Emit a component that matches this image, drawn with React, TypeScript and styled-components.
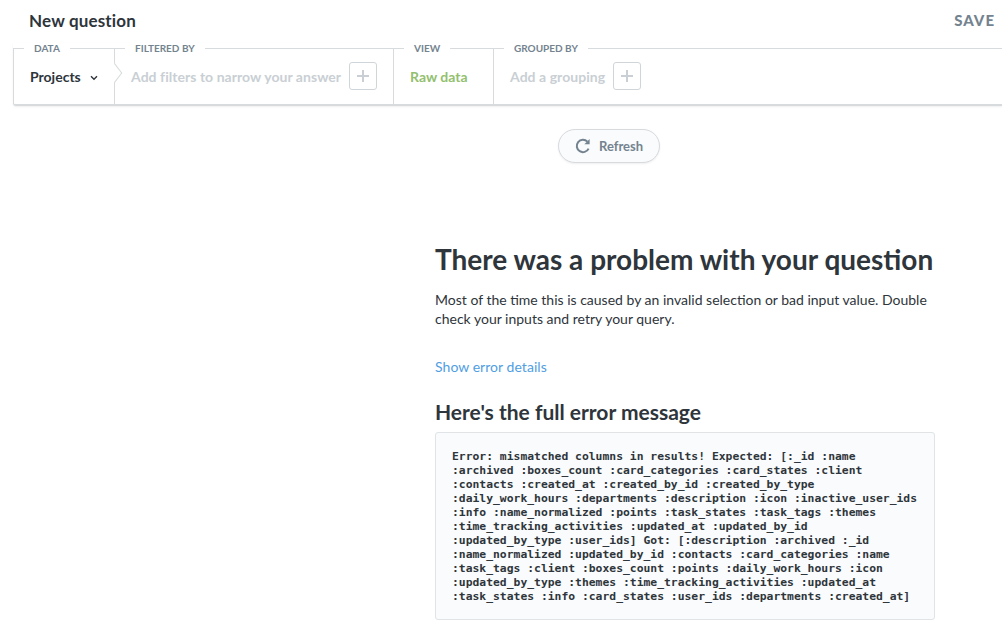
import React from "react";
import styled, { createGlobalStyle } from "styled-components";

const Global = createGlobalStyle`
  html, body { margin: 0; padding: 0; background: #fff; height: 640px; overflow: hidden; }
  body { font-family: Lato, "Open Sans", sans-serif; color: #2e353b; }
`;

const Header = styled.header`
  display: flex;
  align-items: center;
  justify-content: space-between;
  height: 42px;
  padding: 0 7px 2px 29px;
  box-sizing: border-box;
`;
const Title = styled.h1`
  margin: 0;
  font-size: 17px;
  font-weight: 700;
  letter-spacing: 0.17px;
  color: #2e353b;
`;
const Save = styled.span`
  font-size: 15px;
  font-weight: 900;
  letter-spacing: 1px;
  color: #74838f;
`;
const Bar = styled.div`
  display: flex;
  margin-left: 13px;
  margin-top: 1px;
  height: 61px;
  border-bottom: 2px solid #d7dbde;
  box-shadow: 0 1px 2px rgba(46, 53, 59, 0.08);
  border-bottom-left-radius: 3px;
`;
const Section = styled.section<{ $w?: number; $first?: boolean }>`
  display: flex;
  flex-direction: column;
  flex: ${(p) => (p.$w ? `0 0 ${p.$w}px` : "1 1 auto")};
  position: relative;
  &::before {
    content: "";
    position: absolute;
    left: 0;
    top: 5px;
    bottom: 0;
    width: 1px;
    background: #d7dbde;
    border-top-left-radius: ${(p) => (p.$first ? "3px" : "0")};
  }
`;
const LabelRow = styled.div<{ $gap: number }>`
  display: flex;
  align-items: center;
  height: 11px;
  gap: 10px;
  &::before {
    content: "";
    flex: 0 0 ${(p) => p.$gap}px;
    height: 1px;
    background: #d7dbde;
  }
  &::after {
    content: "";
    flex: 1;
    height: 1px;
    background: #d7dbde;
  }
`;
const Label = styled.span`
  font-size: 10px;
  font-weight: 700;
  line-height: 11px;
  text-transform: uppercase;
  color: #74838f;
`;
const Body = styled.div<{ $pad: number }>`
  flex: 1;
  display: flex;
  align-items: center;
  gap: 7.5px;
  padding-left: ${(p) => p.$pad}px;
  padding-bottom: 6px;
  font-size: 14px;
  font-weight: 700;
`;
const Strong = styled.span`
  color: #2e353b;
`;
const Ghost = styled.span`
  color: #c9cfd4;
  letter-spacing: 0.05px;
`;
const Green = styled.span`
  color: #93bf6f;
`;
const AddBox = styled.span`
  display: flex;
  align-items: center;
  justify-content: center;
  box-sizing: border-box;
  width: 28px;
  height: 28px;
  border: 1px solid #d0d5d9;
  border-radius: 3px;
  color: #c9cfd4;
`;
const Notch = styled.span`
  position: absolute;
  left: -1px;
  top: 24px;
  width: 11px;
  height: 11px;
  background: #fff;
  border-top: 1px solid #d7dbde;
  border-right: 1px solid #d7dbde;
  transform: rotate(45deg) skew(8deg, 8deg);
  transform-origin: center;
  margin-left: -4px;
`;
const ChevronMark = styled.svg`
  margin: 3px 0 0 2px;
`;
const Main = styled.main`
  display: flex;
  flex-direction: column;
`;
const RefreshRow = styled.div`
  display: flex;
  justify-content: center;
  padding: 23px 0 0 216px;
`;
const RefreshButton = styled.button`
  display: flex;
  align-items: center;
  gap: 8px;
  height: 34px;
  width: 102px;
  justify-content: center;
  border: 1px solid #d7dbde;
  border-radius: 17px;
  background: #f9fbfc;
  box-shadow: 0 1px 2px rgba(46, 53, 59, 0.08);
  font-family: inherit;
  font-size: 13px;
  font-weight: 700;
  color: #74838f;
  padding: 0;
`;
const ErrorBlock = styled.div`
  width: 500px;
  margin-left: 435px;
  margin-top: 78px;
`;
const Heading = styled.h2`
  margin: 0;
  font-size: 28px;
  line-height: 36px;
  font-weight: 700;
  color: #2e353b;
`;
const Message = styled.p`
  margin: 13px 0 0;
  font-size: 14px;
  line-height: 19px;
  color: #2e353b;
`;
const DetailsLink = styled.a`
  display: block;
  margin-top: 29px;
  font-size: 14px;
  line-height: 20px;
  letter-spacing: 0.05px;
  color: #509ee3;
`;
const SubHeading = styled.h3`
  margin: 22px 0 0;
  font-size: 21px;
  line-height: 26px;
  font-weight: 700;
  color: #2e353b;
`;
const Pre = styled.pre`
  margin: 7px 0 0;
  padding: 16px 10px 16px 16px;
  border: 1px solid #e0e4e7;
  border-radius: 3px;
  background: #f9fbfc;
  font-family: "DejaVu Sans Mono", "Liberation Mono", monospace;
  font-size: 11.37px;
  font-weight: 700;
  line-height: 14px;
  color: #2e353b;
  white-space: pre-wrap;
`;

const Plus = () => (
  <svg width="14" height="14" viewBox="0 0 14 14" fill="none" stroke="currentColor" strokeWidth="2">
    <path d="M7 1v12M1 7h12" />
  </svg>
);
const Chevron = () => (
  <ChevronMark width="8" height="6" viewBox="0 0 8 6" fill="none" stroke="#2e353b" strokeWidth="1.4">
    <path d="M1 1.2 4 4.2 7 1.2" />
  </ChevronMark>
);
const RefreshIcon = () => (
  <svg width="16" height="16" viewBox="0 0 16 16" fill="none" stroke="#74838f" strokeWidth="2">
    <path d="M13.6 10.6A6.2 6.2 0 1 1 12.4 3.6" />
    <path d="M14.6 1v5.2H9.4z" fill="#74838f" stroke="none" />
  </svg>
);

const errorText = `Error: mismatched columns in results! Expected: [:_id :name
:archived :boxes_count :card_categories :card_states :client
:contacts :created_at :created_by_id :created_by_type
:daily_work_hours :departments :description :icon :inactive_user_ids
:info :name_normalized :points :task_states :task_tags :themes
:time_tracking_activities :updated_at :updated_by_id
:updated_by_type :user_ids] Got: [:description :archived :_id
:name_normalized :updated_by_id :contacts :card_categories :name
:task_tags :client :boxes_count :points :daily_work_hours :icon
:updated_by_type :themes :time_tracking_activities :updated_at
:task_states :info :card_states :user_ids :departments :created_at]`;

export default function App() {
  return (
    <>
      <Global />
      <Header>
        <Title>New question</Title>
        <Save>SAVE</Save>
      </Header>
      <Bar>
        <Section $w={101} $first>
          <LabelRow $gap={11}>
            <Label>Data</Label>
          </LabelRow>
          <Body $pad={17}>
            <Strong>Projects</Strong>
            <Chevron />
          </Body>
        </Section>
        <Section $w={279}>
          <LabelRow $gap={11}>
            <Label>Filtered by</Label>
          </LabelRow>
          <Notch />
          <Body $pad={17}>
            <Ghost>Add filters to narrow your answer</Ghost>
            <AddBox>
              <Plus />
            </AddBox>
          </Body>
        </Section>
        <Section $w={100}>
          <LabelRow $gap={11}>
            <Label>View</Label>
          </LabelRow>
          <Body $pad={17}>
            <Green>Raw data</Green>
          </Body>
        </Section>
        <Section>
          <LabelRow $gap={11}>
            <Label>Grouped by</Label>
          </LabelRow>
          <Body $pad={17}>
            <Ghost>Add a grouping</Ghost>
            <AddBox>
              <Plus />
            </AddBox>
          </Body>
        </Section>
      </Bar>
      <Main>
        <RefreshRow>
          <RefreshButton>
            <RefreshIcon />
            Refresh
          </RefreshButton>
        </RefreshRow>
        <ErrorBlock>
          <Heading>There was a problem with your question</Heading>
          <Message>
            Most of the time this is caused by an invalid selection or bad input value. Double
            check your inputs and retry your query.
          </Message>
          <DetailsLink>Show error details</DetailsLink>
          <SubHeading>Here's the full error message</SubHeading>
          <Pre>{errorText}</Pre>
        </ErrorBlock>
      </Main>
    </>
  );
}
